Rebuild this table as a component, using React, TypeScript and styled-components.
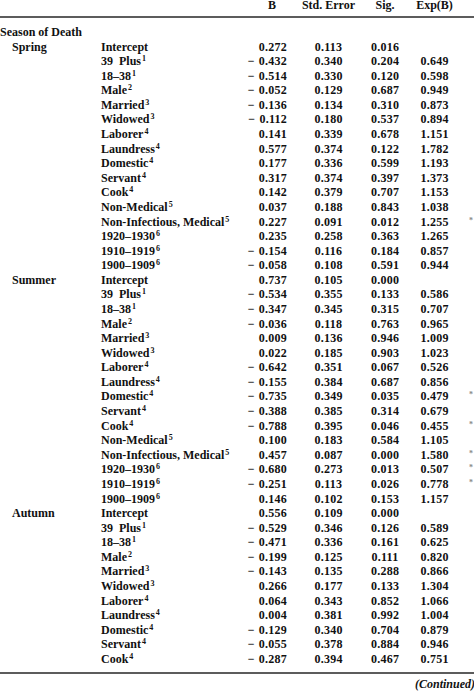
import React from 'react';
import styled, { createGlobalStyle } from 'styled-components';

const GlobalStyle = createGlobalStyle`
  html, body {
    margin: 0;
    padding: 0;
    background: #ffffff;
  }
  body {
    font-family: "Liberation Serif", "Times New Roman", serif;
    font-weight: 700;
    font-size: 12px;
    color: #111111;
    overflow: hidden;
  }
`;

const Page = styled.div`
  width: 474px;
`;

const COLUMNS = '101px 139px 47px 83px 30px 69px 5px';

const HeadRow = styled.div`
  display: grid;
  grid-template-columns: ${COLUMNS};
  height: 12px;
  line-height: 11px;
  padding-bottom: 4px;
  border-bottom: 2px solid #5c5c5c;
`;

const HeadCell = styled.div<{ $pad?: number }>`
  text-align: ${(p) => (p.$pad !== undefined ? 'right' : 'center')};
  padding-right: ${(p) => p.$pad ?? 0}px;
  white-space: nowrap;
`;

const Body = styled.div`
  padding-top: 7px;
  padding-bottom: 6px;
  border-bottom: 2px solid #5c5c5c;
`;

const Row = styled.div`
  display: grid;
  grid-template-columns: ${COLUMNS};
  height: 14.58px;
  line-height: 14.58px;
  white-space: nowrap;
`;

const Title = styled.div`
  grid-column: 1 / 3;
`;

const Group = styled.div`
  padding-left: 12px;
`;

const Variable = styled.div``;

const Num = styled.div<{ $align: 'right' | 'center' }>`
  justify-self: ${(p) => (p.$align === 'right' ? 'end' : 'center')};
  letter-spacing: 0.25px;
`;

const Minus = styled.span`
  margin-right: 4px;
`;

const Sup = styled.sup`
  font-size: 8px;
  line-height: 0;
  vertical-align: 4px;
  margin-left: 1px;
`;

const Star = styled.div`
  font-size: 8px;
  color: #8a8a8a;
  line-height: 12px;
`;

const Footer = styled.div`
  margin-top: 3px;
  margin-right: -1px;
  text-align: right;
  font-style: italic;
  line-height: 14px;
`;

type Entry = [string, number | null, string, string, string, string, boolean?];

const groups: { name: string; rows: Entry[] }[] = [
  {
    name: 'Spring',
    rows: [
      ['Intercept', null, '0.272', '0.113', '0.016', ''],
      ['39\u2002Plus', 1, '−0.432', '0.340', '0.204', '0.649'],
      ['18–38', 1, '−0.514', '0.330', '0.120', '0.598'],
      ['Male', 2, '−0.052', '0.129', '0.687', '0.949'],
      ['Married', 3, '−0.136', '0.134', '0.310', '0.873'],
      ['Widowed', 3, '−0.112', '0.180', '0.537', '0.894'],
      ['Laborer', 4, '0.141', '0.339', '0.678', '1.151'],
      ['Laundress', 4, '0.577', '0.374', '0.122', '1.782'],
      ['Domestic', 4, '0.177', '0.336', '0.599', '1.193'],
      ['Servant', 4, '0.317', '0.374', '0.397', '1.373'],
      ['Cook', 4, '0.142', '0.379', '0.707', '1.153'],
      ['Non-Medical', 5, '0.037', '0.188', '0.843', '1.038'],
      ['Non-Infectious, Medical', 5, '0.227', '0.091', '0.012', '1.255', true],
      ['1920–1930', 6, '0.235', '0.258', '0.363', '1.265'],
      ['1910–1919', 6, '−0.154', '0.116', '0.184', '0.857'],
      ['1900–1909', 6, '−0.058', '0.108', '0.591', '0.944'],
    ],
  },
  {
    name: 'Summer',
    rows: [
      ['Intercept', null, '0.737', '0.105', '0.000', ''],
      ['39\u2002Plus', 1, '−0.534', '0.355', '0.133', '0.586'],
      ['18–38', 1, '−0.347', '0.345', '0.315', '0.707'],
      ['Male', 2, '−0.036', '0.118', '0.763', '0.965'],
      ['Married', 3, '0.009', '0.136', '0.946', '1.009'],
      ['Widowed', 3, '0.022', '0.185', '0.903', '1.023'],
      ['Laborer', 4, '−0.642', '0.351', '0.067', '0.526'],
      ['Laundress', 4, '−0.155', '0.384', '0.687', '0.856'],
      ['Domestic', 4, '−0.735', '0.349', '0.035', '0.479', true],
      ['Servant', 4, '−0.388', '0.385', '0.314', '0.679'],
      ['Cook', 4, '−0.788', '0.395', '0.046', '0.455', true],
      ['Non-Medical', 5, '0.100', '0.183', '0.584', '1.105'],
      ['Non-Infectious, Medical', 5, '0.457', '0.087', '0.000', '1.580', true],
      ['1920–1930', 6, '−0.680', '0.273', '0.013', '0.507', true],
      ['1910–1919', 6, '−0.251', '0.113', '0.026', '0.778', true],
      ['1900–1909', 6, '0.146', '0.102', '0.153', '1.157'],
    ],
  },
  {
    name: 'Autumn',
    rows: [
      ['Intercept', null, '0.556', '0.109', '0.000', ''],
      ['39\u2002Plus', 1, '−0.529', '0.346', '0.126', '0.589'],
      ['18–38', 1, '−0.471', '0.336', '0.161', '0.625'],
      ['Male', 2, '−0.199', '0.125', '0.111', '0.820'],
      ['Married', 3, '−0.143', '0.135', '0.288', '0.866'],
      ['Widowed', 3, '0.266', '0.177', '0.133', '1.304'],
      ['Laborer', 4, '0.064', '0.343', '0.852', '1.066'],
      ['Laundress', 4, '0.004', '0.381', '0.992', '1.004'],
      ['Domestic', 4, '−0.129', '0.340', '0.704', '0.879'],
      ['Servant', 4, '−0.055', '0.378', '0.884', '0.946'],
      ['Cook', 4, '−0.287', '0.394', '0.467', '0.751'],
    ],
  },
];

function Value({ text }: { text: string }) {
  if (text.startsWith('−')) {
    return (
      <>
        <Minus>−</Minus>
        {text.slice(1)}
      </>
    );
  }
  return <>{text}</>;
}

export default function App() {
  return (
    <Page>
      <GlobalStyle />
      <HeadRow>
        <div />
        <div />
        <HeadCell $pad={11}>B</HeadCell>
        <HeadCell>Std. Error</HeadCell>
        <HeadCell>Sig.</HeadCell>
        <HeadCell>Exp(B)</HeadCell>
        <div />
      </HeadRow>

      <Body>
        <Row>
          <Title>Season of Death</Title>
        </Row>
        {groups.map((group) =>
          group.rows.map(([label, note, b, se, sig, exp, star], i) => (
            <Row key={group.name + label}>
              <Group>{i === 0 ? group.name : ''}</Group>
              <Variable>
                {label}
                {note !== null && <Sup>{note}</Sup>}
              </Variable>
              <Num $align="right">
                <Value text={b} />
              </Num>
              <Num $align="center">{se}</Num>
              <Num $align="center">{sig}</Num>
              <Num $align="center">{exp}</Num>
              <Star>{star ? '*' : ''}</Star>
            </Row>
          ))
        )}
      </Body>

      <Footer>(Continued)</Footer>
    </Page>
  );
}
